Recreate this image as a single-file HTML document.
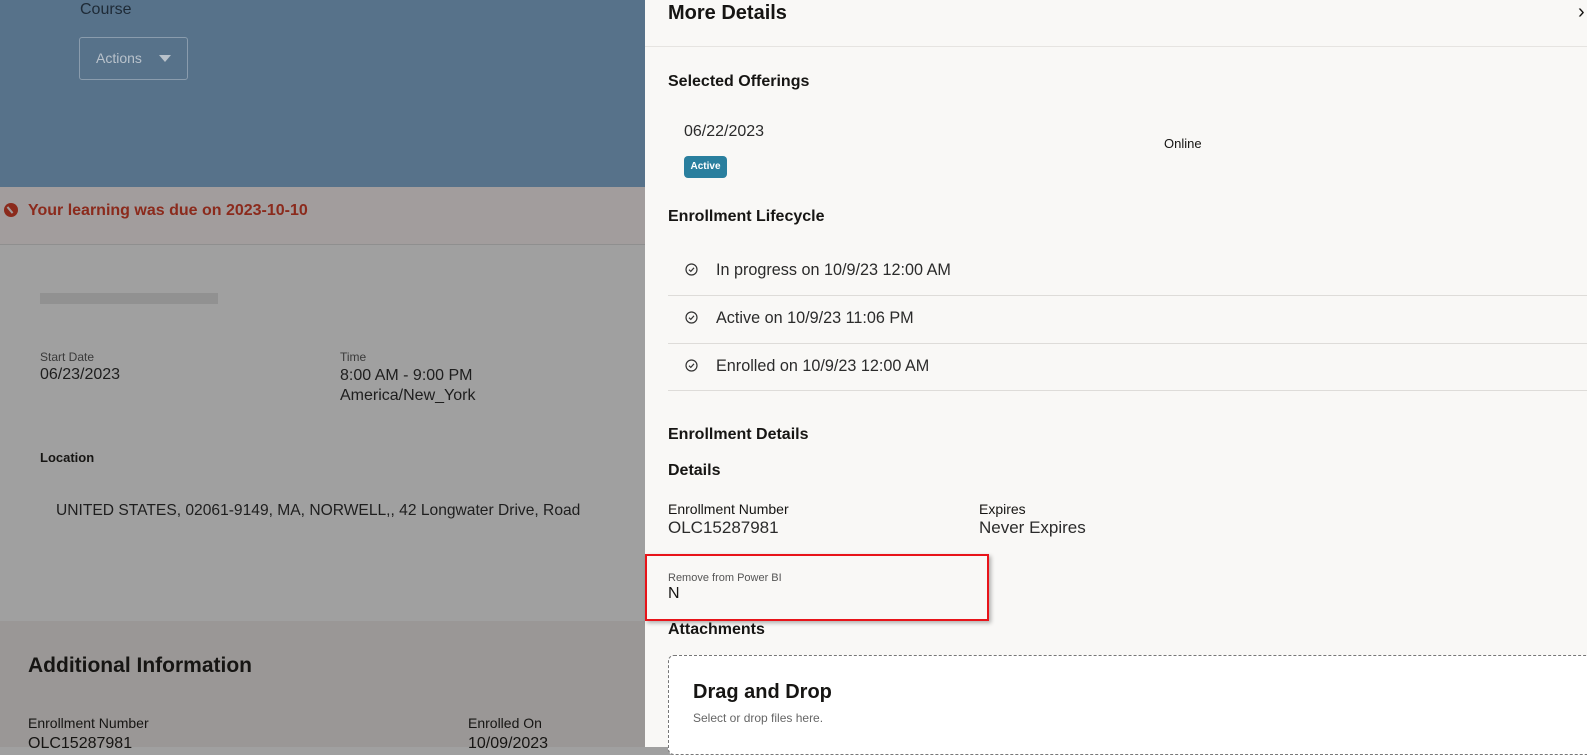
<!DOCTYPE html>
<html><head><meta charset="utf-8"><style>
*{margin:0;padding:0;box-sizing:border-box}
body{width:1587px;height:747px;overflow:hidden;position:relative;font-family:"Liberation Sans",sans-serif;color:#161513;background:#a0a0a0}
.a{position:absolute;white-space:nowrap}
.b{font-weight:bold}
</style></head><body>
<div class="a" style="left:0;top:0;width:645px;height:187px;background:#57728a"></div>
<div class="a" style="left:80px;top:1px;font-size:16px;color:#1e2a36">Course</div>
<div class="a" style="left:79px;top:37px;width:109px;height:43px;border:1px solid #8a9cad;border-radius:3px"></div>
<div class="a" style="left:96px;top:50px;font-size:14px;color:#b9c2cb">Actions</div>
<div class="a" style="left:159px;top:55px;width:0;height:0;border-left:6px solid transparent;border-right:6px solid transparent;border-top:7px solid #b9c2cb"></div>
<div class="a" style="left:0;top:187px;width:645px;height:58px;background:#a29d9d;border-bottom:1px solid #8f8f8f"></div>
<div class="a" style="left:4px;top:203px;width:14px;height:14px;border-radius:50%;background:#8b2a1c"></div>
<div class="a" style="left:9px;top:206px;width:2px;height:8px;background:#a29d9d;transform:rotate(-40deg)"></div>
<div class="a b" style="left:28px;top:202px;font-size:16px;color:#8b2a1c">Your learning was due on 2023-10-10</div>
<div class="a" style="left:40px;top:293px;width:178px;height:11px;background:#8a8a8a;opacity:.7"></div>
<div class="a" style="left:40px;top:350px;font-size:12px;color:#3a3a3a">Start Date</div>
<div class="a" style="left:40px;top:366px;font-size:16px;color:#1e1e1e">06/23/2023</div>
<div class="a" style="left:340px;top:350px;font-size:12px;color:#3a3a3a">Time</div>
<div class="a" style="left:340px;top:366px;font-size:16px;color:#1e1e1e;line-height:20px">8:00 AM - 9:00 PM<br>America/New_York</div>
<div class="a b" style="left:40px;top:450px;font-size:13px">Location</div>
<div class="a" style="left:56px;top:502px;font-size:15.6px;color:#1e1e1e">UNITED STATES, 02061-9149, MA, NORWELL,, 42 Longwater Drive, Road</div>
<div class="a" style="left:0;top:621px;width:645px;height:126px;background:#9a9796"></div>
<div class="a b" style="left:28px;top:654px;font-size:21px">Additional Information</div>
<div class="a" style="left:28px;top:715px;font-size:14px">Enrollment Number</div>
<div class="a" style="left:468px;top:715px;font-size:14px">Enrolled On</div>
<div class="a" style="left:28px;top:735px;font-size:16px">OLC15287981</div>
<div class="a" style="left:468px;top:735px;font-size:16px">10/09/2023</div>

<div class="a" style="left:645px;top:0;width:942px;height:747px;background:#f9f8f6"></div>
<div class="a b" style="left:668px;top:2px;font-size:20px">More Details</div>
<div class="a" style="left:1578px;top:1px;font-size:20px">›</div>
<div class="a" style="left:645px;top:46px;width:942px;height:1px;background:#e6e4e1"></div>
<div class="a b" style="left:668px;top:73px;font-size:16px">Selected Offerings</div>
<div class="a" style="left:684px;top:123px;font-size:16px;color:#2b2b2b">06/22/2023</div>
<div class="a b" style="left:684px;top:156px;width:43px;height:22px;border-radius:4px;background:#2a7f9e;color:#fff;font-size:10px;text-align:center;line-height:22px">Active</div>
<div class="a" style="left:1164px;top:136px;font-size:13px">Online</div>
<div class="a b" style="left:668px;top:208px;font-size:16px">Enrollment Lifecycle</div>
<svg class="a" style="left:685px;top:263px" width="13" height="13" viewBox="0 0 13 13"><circle cx="6.5" cy="6.5" r="5.5" fill="none" stroke="#333" stroke-width="1.2"/><path d="M4 6.7 L5.8 8.4 L9 4.8" fill="none" stroke="#333" stroke-width="1.2"/></svg>
<div class="a" style="left:716px;top:261px;font-size:16.2px;color:#2b2b2b">In progress on 10/9/23 12:00 AM</div>
<div class="a" style="left:668px;top:295px;width:919px;height:1px;background:#dedcd9"></div>
<svg class="a" style="left:685px;top:311px" width="13" height="13" viewBox="0 0 13 13"><circle cx="6.5" cy="6.5" r="5.5" fill="none" stroke="#333" stroke-width="1.2"/><path d="M4 6.7 L5.8 8.4 L9 4.8" fill="none" stroke="#333" stroke-width="1.2"/></svg>
<div class="a" style="left:716px;top:309px;font-size:16.2px;color:#2b2b2b">Active on 10/9/23 11:06 PM</div>
<div class="a" style="left:668px;top:343px;width:919px;height:1px;background:#dedcd9"></div>
<svg class="a" style="left:685px;top:359px" width="13" height="13" viewBox="0 0 13 13"><circle cx="6.5" cy="6.5" r="5.5" fill="none" stroke="#333" stroke-width="1.2"/><path d="M4 6.7 L5.8 8.4 L9 4.8" fill="none" stroke="#333" stroke-width="1.2"/></svg>
<div class="a" style="left:716px;top:357px;font-size:16.2px;color:#2b2b2b">Enrolled on 10/9/23 12:00 AM</div>
<div class="a" style="left:668px;top:390px;width:919px;height:1px;background:#dedcd9"></div>
<div class="a b" style="left:668px;top:426px;font-size:16px">Enrollment Details</div>
<div class="a b" style="left:668px;top:462px;font-size:16px">Details</div>
<div class="a" style="left:668px;top:501px;font-size:14px">Enrollment Number</div>
<div class="a" style="left:668px;top:518px;font-size:17px;color:#2b2b2b">OLC15287981</div>
<div class="a" style="left:979px;top:501px;font-size:14px">Expires</div>
<div class="a" style="left:979px;top:518px;font-size:17px;color:#2b2b2b">Never Expires</div>
<div class="a" style="left:645px;top:554px;width:344px;height:67px;border:2px solid #e8141a;box-shadow:2px 2px 4px rgba(0,0,0,.3)"></div>
<div class="a" style="left:668px;top:572px;font-size:11px;color:#555">Remove from Power BI</div>
<div class="a" style="left:668px;top:585px;font-size:16px">N</div>
<div class="a b" style="left:668px;top:621px;font-size:16px">Attachments</div>
<div class="a" style="left:668px;top:655px;width:930px;height:100px;background:#fff;border:1px dashed #777;border-radius:6px"></div>
<div class="a b" style="left:693px;top:681px;font-size:20px">Drag and Drop</div>
<div class="a" style="left:693px;top:711px;font-size:12px;color:#666">Select or drop files here.</div>
</body></html>
